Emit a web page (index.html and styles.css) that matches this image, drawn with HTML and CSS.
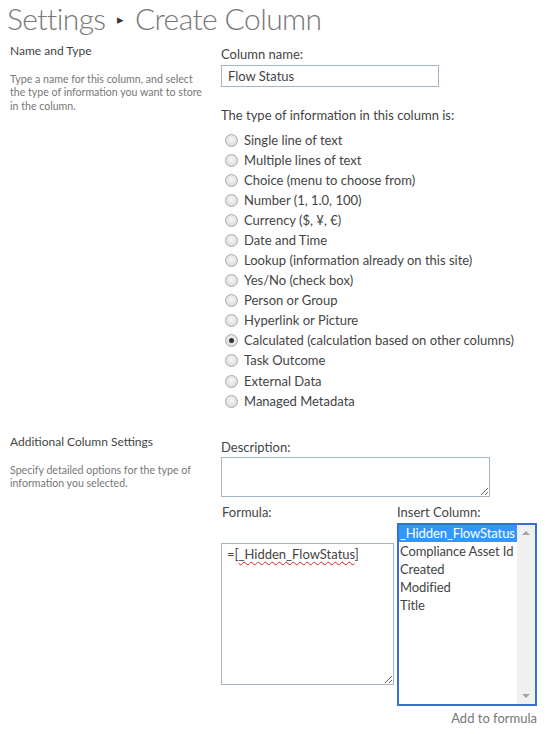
FILE: index.html
```html
<!DOCTYPE html>
<html lang="en">
<head>
<meta charset="utf-8">
<title>Settings - Create Column</title>
<link rel="stylesheet" href="styles.css">
</head>
<body>
<div class="page">
  <h1 class="title"><span>Settings</span><span class="arrow">&#9656;</span><span>Create Column</span></h1>

  <section class="row row-first">
    <div class="side">
      <h2 class="side-head">Name and Type</h2>
      <p class="side-desc">Type a name for this column, and select the type of information you want to store in the column.</p>
    </div>
    <div class="main">
      <div class="label">Column name:</div>
      <input class="textbox" type="text" value="Flow Status">
      <div class="label type-label">The type of information in this column is:</div>
      <ul class="radios">
        <li><span class="radio"></span>Single line of text</li>
        <li><span class="radio"></span>Multiple lines of text</li>
        <li><span class="radio"></span>Choice (menu to choose from)</li>
        <li><span class="radio"></span>Number (1, 1.0, 100)</li>
        <li><span class="radio"></span>Currency ($, ¥, €)</li>
        <li><span class="radio"></span>Date and Time</li>
        <li><span class="radio"></span>Lookup (information already on this site)</li>
        <li><span class="radio"></span>Yes/No (check box)</li>
        <li><span class="radio"></span>Person or Group</li>
        <li><span class="radio"></span>Hyperlink or Picture</li>
        <li><span class="radio checked"></span>Calculated (calculation based on other columns)</li>
        <li><span class="radio"></span>Task Outcome</li>
        <li class="late"><span class="radio"></span>External Data</li>
        <li><span class="radio"></span>Managed Metadata</li>
      </ul>
    </div>
  </section>

  <section class="row row-second">
    <div class="side">
      <h2 class="side-head">Additional Column Settings</h2>
      <p class="side-desc">Specify detailed options for the type of information you selected.</p>
    </div>
    <div class="main main-second">
      <div class="label">Description:</div>
      <div class="area desc-area"></div>
      <div class="formula-grid">
        <div class="formula-col">
          <div class="label">Formula:</div>
          <div class="area formula-area">=[<span class="squiggle">_Hidden_FlowStatus</span>]</div>
        </div>
        <div class="insert-col">
          <div class="label">Insert Column:</div>
          <div class="listbox">
            <ul class="options">
              <li class="selected">_Hidden_FlowStatus</li>
              <li>Compliance Asset Id</li>
              <li>Created</li>
              <li>Modified</li>
              <li>Title</li>
            </ul>
            <div class="scrollbar">
              <span class="arrow-up"></span>
              <span class="arrow-down"></span>
            </div>
          </div>
          <div class="add-link">Add to formula</div>
        </div>
      </div>
    </div>
  </section>
</div>
</body>
</html>
```
FILE: styles.css
```css
html, body {
  margin: 0;
  padding: 0;
  background: #fff;
}

body {
  font-family: Lato, "Open Sans", "Liberation Sans", sans-serif;
  color: #444;
  font-size: 13px;
}

.page {
  width: 556px;
}

.title {
  margin: 0;
  padding-left: 7px;
  height: 36px;
  font-size: 30px;
  line-height: 36px;
  font-weight: 300;
  color: #777;
  white-space: nowrap;
  letter-spacing: -0.6px;
}

.title .arrow {
  display: inline-block;
  font-size: 13px;
  line-height: 10px;
  color: #333;
  margin: 0 12px 0 11px;
  vertical-align: 6px;
}

.row {
  display: grid;
  grid-template-columns: 211px 345px;
  padding-left: 10px;
}

.row-first {
  margin-top: 7px;
}

.row-second {
  margin-top: 23px;
}

.main {
  padding-top: 2px;
}

.main-second {
  padding-top: 4px;
}

.side-head {
  margin: 0;
  font-size: 12px;
  line-height: 16px;
  font-weight: 400;
  color: #444;
}

.side-desc {
  margin: 14px 0 0 0;
  font-size: 10.6px;
  line-height: 13.33px;
  color: #777;
  width: 198px;
}

.label {
  line-height: 18px;
  color: #444;
}

.textbox {
  display: block;
  box-sizing: border-box;
  margin: 2px 0 0 0;
  width: 218px;
  height: 22px;
  border: 1px solid #a6b3c1;
  padding: 0 6px;
  font-family: inherit;
  font-size: 13px;
  color: #444;
  outline: none;
}

.type-label {
  margin-top: 19px;
}

.radios {
  list-style: none;
  margin: 6px 0 0 0;
  padding: 0 0 0 4px;
}

.radios li {
  display: flex;
  align-items: center;
  height: 20px;
  white-space: nowrap;
}

.radios li.late {
  margin-top: 1px;
}

.radio {
  box-sizing: border-box;
  width: 13px;
  height: 13px;
  border-radius: 50%;
  border: 1px solid #a9a9a9;
  background: radial-gradient(circle at 50% 40%, #f6f6f6 0%, #e2e2e2 60%, #d2d2d2 100%);
  margin-right: 6px;
  flex: none;
  display: flex;
  align-items: center;
  justify-content: center;
}

.radio.checked::after {
  content: "";
  width: 5px;
  height: 5px;
  border-radius: 50%;
  background: #333;
}

.area {
  box-sizing: border-box;
  border: 1px solid #a6b3c1;
  background: #fff;
  resize: both;
  overflow: auto;
  font-size: 13px;
  line-height: 15.6px;
  color: #444;
}

.desc-area {
  margin-top: 1px;
  width: 269px;
  height: 40px;
}

.formula-grid {
  display: grid;
  grid-template-columns: 176px 140px;
  margin-top: 6px;
}

.formula-col .label {
  padding-left: 1px;
}

.formula-area {
  margin-top: 22px;
  width: 173px;
  height: 142px;
  padding: 3px 5px;
  white-space: nowrap;
}

.squiggle {
  text-decoration: underline wavy #e02020;
  text-decoration-thickness: 1px;
  text-underline-offset: 2px;
}

.listbox {
  box-sizing: border-box;
  margin-top: 2px;
  width: 140px;
  height: 183px;
  border: 2px solid #3a6fd2;
  display: flex;
  background: #fff;
}

.options {
  list-style: none;
  margin: 0;
  padding: 0;
  flex: 1;
  min-width: 0;
  overflow: hidden;
}

.options li {
  line-height: 18px;
  height: 18px;
  padding-left: 1px;
  white-space: nowrap;
  overflow: hidden;
  color: #444;
  letter-spacing: -0.1px;
}

.options li.selected {
  background: #3297fd;
  color: #fff;
  height: 17px;
  line-height: 17px;
}

.scrollbar {
  width: 18px;
  flex: none;
  background: #f0f0f0;
  display: flex;
  flex-direction: column;
  justify-content: space-between;
  align-items: center;
  padding: 6px 0 6px 0;
  box-sizing: border-box;
}

.arrow-up,
.arrow-down {
  width: 0;
  height: 0;
  border-left: 4px solid transparent;
  border-right: 4px solid transparent;
}

.arrow-up {
  border-bottom: 4px solid #a3a3a3;
}

.arrow-down {
  border-top: 4px solid #a3a3a3;
}

.add-link {
  margin-top: 3px;
  text-align: right;
  line-height: 18px;
  color: #777;
  white-space: nowrap;
}
```
